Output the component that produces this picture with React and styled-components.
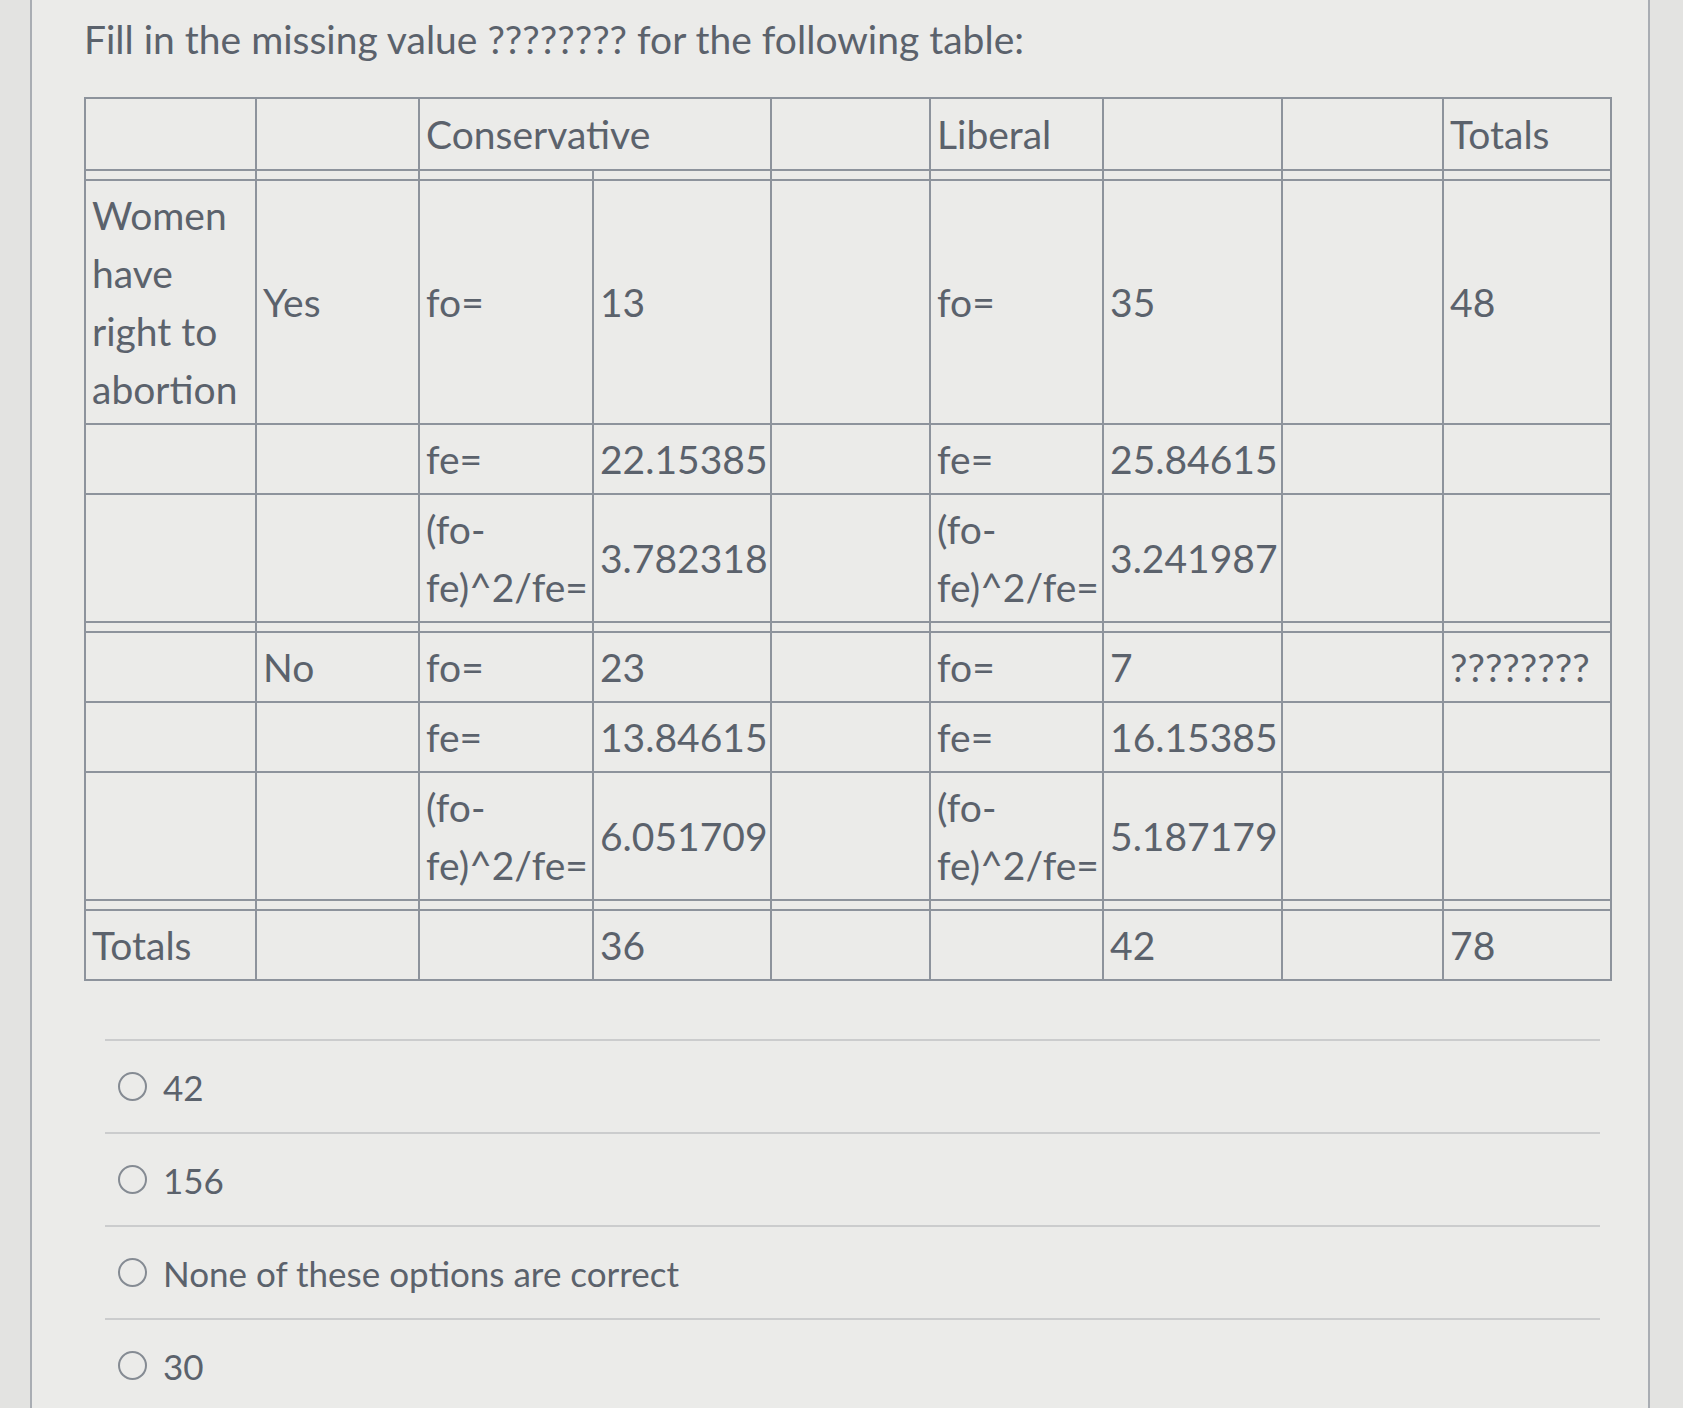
import React from 'react';
import styled, { createGlobalStyle } from 'styled-components';

const GlobalStyle = createGlobalStyle`
  html, body {
    margin: 0;
    padding: 0;
    background: #e3e3e1;
  }
  body {
    font-family: Lato, "Noto Sans", "Liberation Sans", sans-serif;
    color: #5b626c;
  }
`;

const Page = styled.div`
  min-height: 1408px;
  display: flex;
`;

const Card = styled.main`
  margin-left: 30px;
  width: 1620px;
  min-height: 1408px;
  background: #ebebe9;
  border-left: 2px solid #a9adb3;
  border-right: 2px solid #a9adb3;
  box-sizing: border-box;
  padding: 10px 48px 0 52px;
`;

const Question = styled.p`
  margin: 0 0 29px;
  font-size: 39px;
  line-height: 58px;
`;

const Table = styled.table`
  border-collapse: collapse;
  table-layout: fixed;
  width: 1526px;
  font-size: 39px;
  line-height: 58px;
`;

const Cell = styled.td`
  border: 2px solid #8d939c;
  padding: 5px 6px;
  vertical-align: middle;
  text-align: left;
  font-weight: 400;
`;

const HeadCell = styled(Cell).attrs({ as: 'th' })`
  padding: 6px 6px;
`;

const Spacer = styled.tr`
  height: 10px;

  td {
    border: 2px solid #8d939c;
    padding: 0;
  }
`;

const Answers = styled.ul`
  list-style: none;
  margin: 58px 0 0 21px;
  padding: 0;
`;

const Answer = styled.li`
  display: flex;
  align-items: center;
  gap: 16px;
  height: 91px;
  border-top: 2px solid #cbcccd;
  padding-left: 13px;
  font-size: 35px;
`;

const Radio = styled.span`
  width: 25px;
  height: 25px;
  border: 2px solid #858b93;
  border-radius: 50%;
  flex-shrink: 0;
`;

const widths = [171, 163, 174, 178, 159, 173, 179, 161, 168];

const yesRows = [
  ['Women have right to abortion', 'Yes', 'fo=', '13', null, 'fo=', '35', null, '48'],
  [null, null, 'fe=', '22.15385', null, 'fe=', '25.84615', null, null],
  [null, null, '(fo-fe)^2/fe=', '3.782318', null, '(fo-fe)^2/fe=', '3.241987', null, null],
];

const noRows = [
  [null, 'No', 'fo=', '23', null, 'fo=', '7', null, '????????'],
  [null, null, 'fe=', '13.84615', null, 'fe=', '16.15385', null, null],
  [null, null, '(fo-fe)^2/fe=', '6.051709', null, '(fo-fe)^2/fe=', '5.187179', null, null],
];

const totals = ['Totals', null, null, '36', null, null, '42', null, '78'];

const SpacerRow = () => (
  <Spacer>
    {widths.map((_, i) => (
      <td key={i} />
    ))}
  </Spacer>
);

const DataRow = ({ cells }) => (
  <tr>
    {cells.map((c, i) => (
      <Cell key={i}>{c}</Cell>
    ))}
  </tr>
);

const options = ['42', '156', 'None of these options are correct', '30'];

export default function App() {
  return (
    <Page>
      <GlobalStyle />
      <Card>
        <Question>Fill in the missing value ???????? for the following table:</Question>
        <Table>
          <colgroup>
            {widths.map((w, i) => (
              <col key={i} style={{ width: w }} />
            ))}
          </colgroup>
          <thead>
            <tr>
              <HeadCell />
              <HeadCell />
              <HeadCell colSpan={2}>Conservative</HeadCell>
              <HeadCell />
              <HeadCell>Liberal</HeadCell>
              <HeadCell />
              <HeadCell />
              <HeadCell>Totals</HeadCell>
            </tr>
            <SpacerRow />
          </thead>
          <tbody>
            {yesRows.map((r, i) => (
              <DataRow key={i} cells={r} />
            ))}
            <SpacerRow />
            {noRows.map((r, i) => (
              <DataRow key={i} cells={r} />
            ))}
            <SpacerRow />
            <DataRow cells={totals} />
          </tbody>
        </Table>
        <Answers>
          {options.map((o) => (
            <Answer key={o}>
              <Radio />
              {o}
            </Answer>
          ))}
        </Answers>
      </Card>
    </Page>
  );
}
